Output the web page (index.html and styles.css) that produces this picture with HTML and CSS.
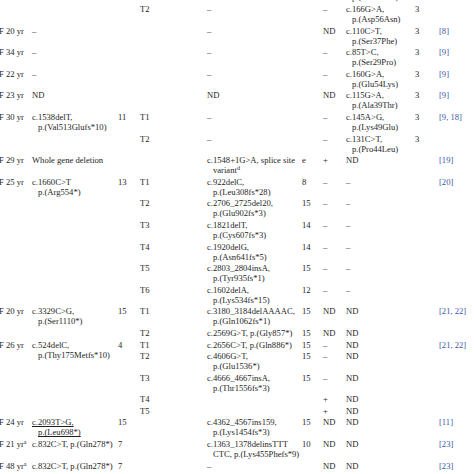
FILE: index.html
```html
<!DOCTYPE html>
<html>
<head>
<meta charset="utf-8">
<link rel="stylesheet" href="styles.css">
</head>
<body>
<table class="tbl">
<colgroup>
<col class="ca"><col class="cb"><col class="cc"><col class="cd"><col class="ce"><col class="cf"><col class="cg"><col class="ch"><col class="ci"><col class="cj">
</colgroup>
<tbody>
<tr><td></td><td></td><td></td><td></td><td></td><td></td><td></td><td><br>p.(Pro59Leu)</td><td></td><td></td></tr>
<tr><td></td><td></td><td></td><td>T2</td><td>–</td><td></td><td>–</td><td>c.166G&gt;A,<br>p.(Asp56Asn)</td><td>3</td><td></td></tr>
<tr><td>F 20 yr</td><td>–</td><td></td><td></td><td>–</td><td></td><td>ND</td><td>c.110C&gt;T,<br>p.(Ser37Phe)</td><td>3</td><td class="ref">[8]</td></tr>
<tr><td>F 34 yr</td><td>–</td><td></td><td></td><td>–</td><td></td><td>–</td><td>c.85T&gt;C,<br>p.(Ser29Pro)</td><td>3</td><td class="ref">[9]</td></tr>
<tr><td>F 22 yr</td><td>–</td><td></td><td></td><td>–</td><td></td><td>–</td><td>c.160G&gt;A,<br>p.(Glu54Lys)</td><td>3</td><td class="ref">[9]</td></tr>
<tr><td>F 23 yr</td><td>ND</td><td></td><td></td><td>ND</td><td></td><td>ND</td><td>c.115G&gt;A,<br>p.(Ala39Thr)</td><td>3</td><td class="ref">[9]</td></tr>
<tr><td rowspan="2">F 30 yr</td><td rowspan="2">c.1538delT,<br>p.(Val513Glufs*10)</td><td rowspan="2">11</td><td>T1</td><td>–</td><td></td><td>–</td><td>c.145A&gt;G,<br>p.(Lys49Glu)</td><td>3</td><td rowspan="2" class="ref">[9, 18]</td></tr>
<tr><td>T2</td><td>–</td><td></td><td>–</td><td>c.131C&gt;T,<br>p.(Pro44Leu)</td><td>3</td></tr>
<tr><td>F 29 yr</td><td>Whole gene deletion</td><td></td><td></td><td>c.1548+1G&gt;A, splice site<br>variant<sup>d</sup></td><td>e</td><td>+</td><td>ND</td><td></td><td class="ref">[19]</td></tr>
<tr><td rowspan="6">F 25 yr</td><td rowspan="6">c.1660C&gt;T<br>p.(Arg554*)</td><td rowspan="6">13</td><td>T1</td><td>c.922delC,<br>p.(Leu308fs*28)</td><td>8</td><td>–</td><td>–</td><td></td><td rowspan="6" class="ref">[20]</td></tr>
<tr><td>T2</td><td>c.2706_2725del20,<br>p.(Glu902fs*3)</td><td>15</td><td>–</td><td>–</td><td></td></tr>
<tr><td>T3</td><td>c.1821delT,<br>p.(Cys607fs*3)</td><td>14</td><td>–</td><td>–</td><td></td></tr>
<tr><td>T4</td><td>c.1920delG,<br>p.(Asn641fs*5)</td><td>14</td><td>–</td><td>–</td><td></td></tr>
<tr><td>T5</td><td>c.2803_2804insA,<br>p.(Tyr935fs*1)</td><td>15</td><td>–</td><td>–</td><td></td></tr>
<tr><td>T6</td><td>c.1602delA,<br>p.(Lys534fs*15)</td><td>12</td><td>–</td><td>–</td><td></td></tr>
<tr><td rowspan="2">F 20 yr</td><td rowspan="2">c.3329C&gt;G,<br>p.(Ser1110*)</td><td rowspan="2">15</td><td>T1</td><td>c.3180_3184delAAAAC,<br>p.(Gln1062fs*1)</td><td>15</td><td>ND</td><td>ND</td><td></td><td rowspan="2" class="ref">[21, 22]</td></tr>
<tr><td>T2</td><td>c.2569G&gt;T, p.(Gly857*)</td><td>15</td><td>ND</td><td>ND</td><td></td></tr>
<tr><td rowspan="5">F 26 yr</td><td rowspan="5">c.524delC,<br>p.(Thy175Metfs*10)</td><td rowspan="5">4</td><td>T1</td><td>c.2656C&gt;T, p.(Gln886*)</td><td>15</td><td>–</td><td>ND</td><td></td><td rowspan="5" class="ref">[21, 22]</td></tr>
<tr><td>T2</td><td>c.4606G&gt;T,<br>p.(Glu1536*)</td><td>15</td><td>–</td><td>ND</td><td></td></tr>
<tr><td>T3</td><td>c.4666_4667insA,<br>p.(Thr1556fs*3)</td><td>15</td><td>–</td><td>ND</td><td></td></tr>
<tr><td>T4</td><td></td><td></td><td>+</td><td>ND</td><td></td></tr>
<tr><td>T5</td><td></td><td></td><td>+</td><td>ND</td><td></td></tr>
<tr><td>F 24 yr</td><td><span class="u">c.2093T&gt;G,</span><br><span class="u">p.(Leu698*)</span></td><td>15</td><td></td><td>c.4362_4567ins159,<br>p.(Lys1454fs*3)</td><td>15</td><td>ND</td><td>ND</td><td></td><td class="ref">[11]</td></tr>
<tr><td>F 21 yr<sup>a</sup></td><td>c.832C&gt;T, p.(Gln278*)</td><td>7</td><td></td><td>c.1363_1378delinsTTT<br>CTC, p.(Lys455Phefs*9)</td><td>10</td><td>ND</td><td>ND</td><td></td><td class="ref">[23]</td></tr>
<tr><td>F 48 yr<sup>a</sup></td><td>c.832C&gt;T, p.(Gln278*)</td><td>7</td><td></td><td>–</td><td></td><td>ND</td><td>ND</td><td></td><td class="ref">[23]</td></tr>
</tbody>
</table>
</body>
</html>
```
FILE: styles.css
```css
html, body {
  margin: 0;
  padding: 0;
  background: #ffffff;
  overflow: hidden;
}

.tbl {
  border-collapse: collapse;
  table-layout: fixed;
  width: 475px;
  margin: -18.4px 0 0 -1px;
  font-family: "Liberation Serif", "Times New Roman", serif;
  font-size: 8.6px;
  line-height: 10px;
  color: #1e1e1e;
}

.tbl td {
  padding: 0.8px 0 0.8px 6px;
  text-indent: -6px;
  vertical-align: top;
  white-space: nowrap;
}

.ca { width: 33px; }
.cb { width: 86px; }
.cc { width: 22px; }
.cd { width: 67px; }
.ce { width: 95px; }
.cf { width: 21px; }
.cg { width: 23px; }
.ch { width: 69px; }
.ci { width: 24px; }
.cj { width: 35px; }

.ref {
  color: #3a55a4;
}

.u {
  text-decoration: underline;
}

sup {
  font-size: 6px;
  line-height: 0;
  vertical-align: 3px;
}
```
